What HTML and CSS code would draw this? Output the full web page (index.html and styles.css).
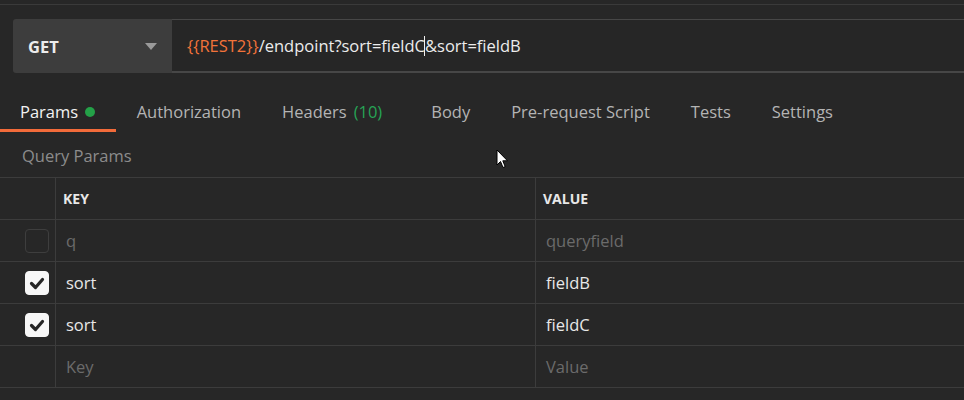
FILE: index.html
```html
<!DOCTYPE html>
<html>
<head>
<meta charset="utf-8">
<link rel="stylesheet" href="styles.css">
</head>
<body>
<div class="page">
  <div class="topline"></div>
  <div class="request-bar">
    <div class="method">
      <span class="method-name">GET</span>
      <span class="caret"></span>
    </div>
    <div class="url">
      <span class="var">{{REST2}}</span><span class="path">/endpoint?sort=fieldC</span><span class="text-cursor"></span><span class="path">&amp;sort=fieldB</span>
    </div>
  </div>
  <div class="tabs">
    <div class="tab active">Params <span class="dot"></span></div>
    <div class="tab">Authorization</div>
    <div class="tab tab-headers">Headers <span class="count">(10)</span></div>
    <div class="tab">Body</div>
    <div class="tab">Pre-request Script</div>
    <div class="tab">Tests</div>
    <div class="tab">Settings</div>
  </div>
  <div class="section-title">Query Params</div>
  <div class="table">
    <div class="row head">
      <div class="cell check"></div>
      <div class="cell key">KEY</div>
      <div class="cell value">VALUE</div>
    </div>
    <div class="row">
      <div class="cell check"><span class="box"></span></div>
      <div class="cell key placeholder">q</div>
      <div class="cell value placeholder">queryfield</div>
    </div>
    <div class="row">
      <div class="cell check"><span class="box on"><svg viewBox="0 0 24 24" width="24" height="24"><path d="M6.5 12.5 L10.5 16.5 L17.5 8.5" fill="none" stroke="#262626" stroke-width="3.2" stroke-linecap="round" stroke-linejoin="round"/></svg></span></div>
      <div class="cell key">sort</div>
      <div class="cell value">fieldB</div>
    </div>
    <div class="row">
      <div class="cell check"><span class="box on"><svg viewBox="0 0 24 24" width="24" height="24"><path d="M6.5 12.5 L10.5 16.5 L17.5 8.5" fill="none" stroke="#262626" stroke-width="3.2" stroke-linecap="round" stroke-linejoin="round"/></svg></span></div>
      <div class="cell key">sort</div>
      <div class="cell value">fieldC</div>
    </div>
    <div class="row">
      <div class="cell check"></div>
      <div class="cell key placeholder">Key</div>
      <div class="cell value placeholder">Value</div>
    </div>
  </div>
  <svg class="mouse" width="14" height="21" viewBox="0 0 14 21"><path d="M1 1 L1 16 L4.5 12.5 L7 18.5 L9.2 17.6 L6.8 11.8 L11.5 11.8 Z" fill="#ffffff" stroke="#000000" stroke-width="1" stroke-linejoin="miter"/></svg>
</div>
</body>
</html>
```
FILE: styles.css
```css
html, body {
  margin: 0;
  padding: 0;
  background: #272727;
}
.page {
  position: relative;
  width: 964px;
  height: 400px;
  overflow: hidden;
  font-family: "Open Sans", "Noto Sans", sans-serif;
  color: #e8e8e8;
}
.topline {
  height: 4px;
  border-bottom: 1px solid #3a3a3a;
}
.request-bar {
  display: flex;
  margin: 14px 0 0 13px;
  height: 54px;
}
.method {
  width: 159px;
  box-sizing: border-box;
  background: #3d3d3d;
  border-radius: 3px 0 0 3px;
  display: flex;
  align-items: center;
  justify-content: space-between;
  padding: 0 15px 0 15px;
}
.method-name {
  font-weight: 700;
  font-size: 16.5px;
  color: #ececec;
}
.caret {
  width: 0;
  height: 0;
  border-left: 6px solid transparent;
  border-right: 6px solid transparent;
  border-top: 7px solid #9a9a9a;
  margin-top: 1px;
}
.url {
  flex: 1;
  box-sizing: border-box;
  border-top: 1px solid #474747;
  border-bottom: 2px solid #474747;
  background: #262626;
  display: flex;
  align-items: center;
  padding-left: 15px;
  font-size: 16.5px;
  color: #ececec;
  white-space: pre;
}
.var {
  color: #f2733a;
}
.text-cursor {
  display: inline-block;
  width: 1px;
  height: 20px;
  background: #f0f0f0;
  margin: 0 -1px 0 0;
  position: relative;
  left: -1px;
}
.tabs {
  display: flex;
  margin-top: 18px;
  height: 41px;
}
.tab {
  box-sizing: border-box;
  padding: 0 20.5px;
  height: 41px;
  line-height: 40px;
  font-size: 16.5px;
  color: #b4b4b4;
  white-space: nowrap;
  display: flex;
  align-items: center;
  gap: 7px;
}
.tab.active {
  color: #f2f2f2;
  border-bottom: 3px solid #f26b3a;
  padding-top: 3px;
  padding-left: 20px;
  padding-right: 21px;
}
.tab-headers {
  padding-right: 28.5px;
}
.count {
  color: #26a455;
}
.dot {
  display: inline-block;
  width: 10px;
  height: 10px;
  border-radius: 50%;
  background: #24a148;
  margin-top: 1px;
}
.section-title {
  height: 45px;
  line-height: 48px;
  padding-left: 22px;
  font-size: 16.5px;
  color: #8c8c8c;
}
.table {
  border-top: 1px solid #3c3c3c;
}
.row {
  display: grid;
  grid-template-columns: 55px 480px 1fr;
  height: 42px;
  box-sizing: border-box;
  border-bottom: 1px solid #3c3c3c;
}
.cell {
  display: flex;
  align-items: center;
  font-size: 16.5px;
  color: #e8e8e8;
}
.cell.key, .cell.value {
  border-left: 1px solid #3c3c3c;
  padding-left: 10px;
}
.row.head .cell.key, .row.head .cell.value {
  font-size: 14px;
  font-weight: 700;
  color: #e8e8e8;
  padding-left: 7px;
}
.cell.placeholder {
  color: #6b6b6b;
}
.cell.check {
  justify-content: flex-start;
  padding-left: 25px;
}
.box {
  display: block;
  width: 24px;
  height: 24px;
  box-sizing: border-box;
  border: 1px solid #3e3e3e;
  border-radius: 4px;
}
.box.on {
  background: #f7f7f7;
  border-color: #f7f7f7;
  position: relative;
}
.box.on svg {
  position: absolute;
  left: -1px;
  top: -1px;
}
.mouse {
  position: absolute;
  left: 496px;
  top: 149px;
}
```
